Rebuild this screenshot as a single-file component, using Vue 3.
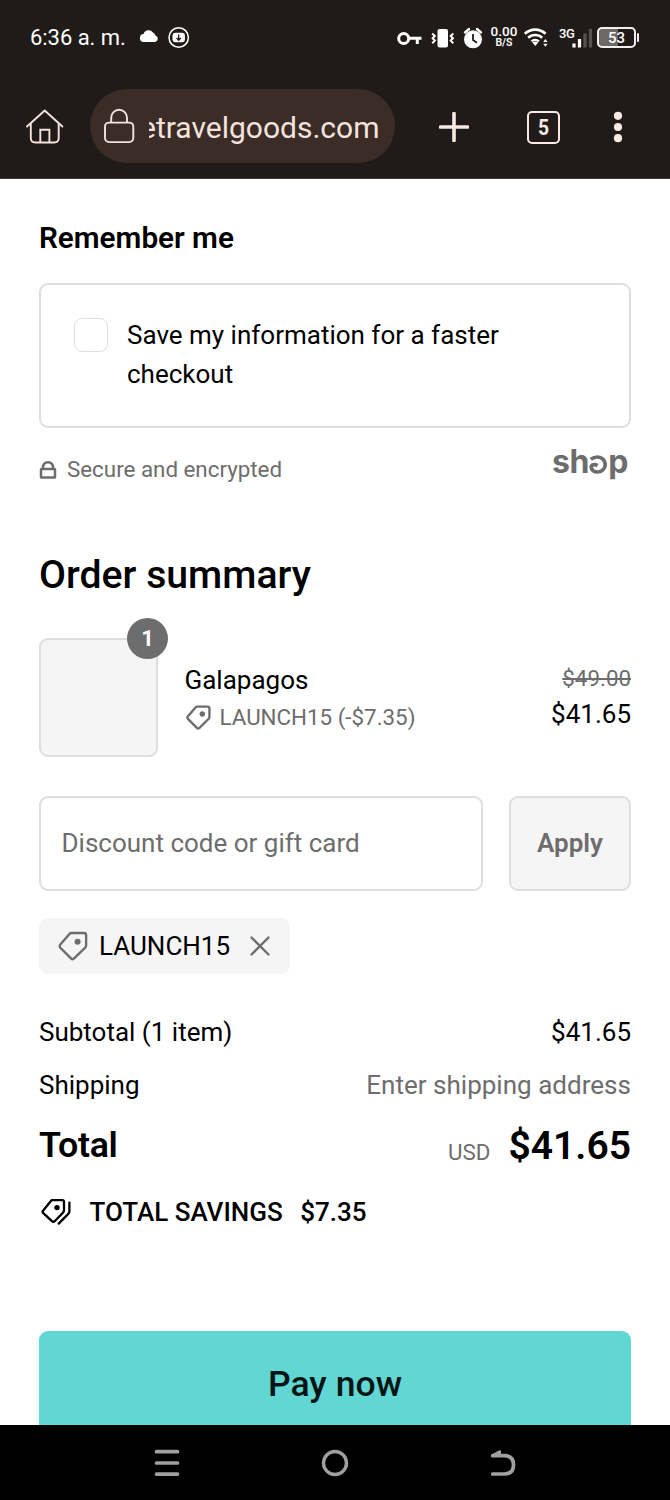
<script setup>
const tagPath = 'M13.6 2H26.4Q28.6 2 28.6 4.2V14.4Q28.6 16 27.4 17.1L16.4 27.9Q14.8 29.4 13.2 27.8L2.4 17Q1 15.4 2.4 13.8L11.6 3Q12.4 2 13.6 2Z'
</script>

<template>
  <div class="screen">
    <header class="chrome">
      <div class="status">
        <span class="time">6:36 a. m.</span>
        <svg class="notif" width="52" height="24" viewBox="138 26 52 24">
          <path d="M143 42a4 4 0 0 1 .6-7.9a5.2 5.2 0 0 1 9.3-1.6a4.4 4.4 0 0 1 2.6 3.1a3.3 3.3 0 0 1-.5 6.4z" fill="#fff" />
          <circle cx="178.700" cy="37.500" r="9.700" fill="none" stroke="#fff" stroke-width="1.500" />
          <rect x="172.500" y="32.800" width="12.400" height="9.400" rx="3" fill="#fff" />
          <path d="M178.700 34.500v5.500M176.600 38l2.100 2.200l2.100-2.200" fill="none" stroke="#201b18" stroke-width="1.300" />
        </svg>
        <svg class="sys" width="96" height="26" viewBox="394 24 96 26">
          <g fill="none" stroke="#fff">
            <circle cx="403.700" cy="37.500" r="5" stroke-width="3" />
            <path d="M409 37.200H421.500M417.300 37.500v5.500" stroke-width="3" />
            <path d="M432.200 32.500l2.600 2.500l-2.200 2.300l2.200 2.300l-2.600 2.700M453.300 32.500l-2.600 2.500l2.200 2.300l-2.200 2.300l2.600 2.700" stroke-width="2" />
            <path d="M465 31.500l4-3.500M481 31.500l-4-3.500" stroke-width="2.400" stroke-linecap="round" />
          </g>
          <rect x="437.500" y="28" width="10.500" height="18.500" rx="2" fill="#fff" />
          <circle cx="473" cy="38.300" r="9" fill="#fff" />
          <path d="M473 33v6l4 2.700" fill="none" stroke="#201b18" stroke-width="1.800" />
        </svg>
        <span class="speed"><b>0.00</b><i>B/S</i></span>
        <svg class="wifi" width="26" height="24" viewBox="523 26 26 24">
          <g fill="none" stroke="#fff" stroke-width="2.600">
            <path d="M524.800 33.800a15 15 0 0 1 20.800 0" />
            <path d="M528.200 37.800a10 10 0 0 1 14 0" />
            <path d="M531.500 41.400a5.500 5.500 0 0 1 7.400 0" />
          </g>
          <path d="M532.400 42.500l2.900 3.600l2.900-3.600q-2.900-2-5.800 0z" fill="#fff" />
          <path d="M543.200 42l2.200-3l2.200 3zM543.200 43.800h4.400l-2.200 3z" fill="#fff" />
        </svg>
        <span class="net">3G</span>
        <svg class="bars" width="22" height="24" viewBox="571 25 22 24">
          <path d="M574 46.500v-4M579.500 46.500v-8.500" stroke="#fff" stroke-width="3.200" />
          <path d="M585 46.500v-14M590.500 46.500v-18.500" stroke="#57524f" stroke-width="3.200" />
        </svg>
        <span class="battery"><span>53</span></span><span class="cap"></span>
      </div>
      <div class="toolbar">
        <svg class="home" width="40" height="38" viewBox="0 0 40 38">
          <g fill="none" stroke="#f3e3dc" stroke-width="1.900" stroke-linecap="round" stroke-linejoin="round">
            <path d="M2 18.500L19.700 2.500L37.400 18.500" />
            <path d="M5.800 16V30Q5.800 34.500 10.300 34.500H29.200Q33.700 34.500 33.700 30V16" />
            <path d="M15.300 34V21.700H24.400V34" stroke-linejoin="miter" />
          </g>
        </svg>
        <div class="url">
          <svg width="32" height="36" viewBox="0 0 32 36">
            <g fill="none" stroke="#f3e3dc" stroke-width="1.900">
              <rect x="2" y="14.600" width="28.300" height="19.500" rx="4" />
              <path d="M8.200 14.500V9.700a7.900 7.900 0 0 1 15.800 0V14.500" />
            </g>
          </svg>
          <div class="domain"><span>etravelgoods.com</span></div>
        </div>
        <svg class="plus" width="30" height="30" viewBox="0 0 30 30">
          <path d="M15 1.500V28.500M1.500 15H28.500" stroke="#f8e9e3" stroke-width="3.600" stroke-linecap="round" />
        </svg>
        <span class="tabs"><span>5</span></span>
        <svg class="dots" width="10" height="32" viewBox="0 0 10 32">
          <g fill="#f8e9e3"><circle cx="5" cy="4.800" r="4.100" /><circle cx="5" cy="16" r="4.100" /><circle cx="5" cy="27.200" r="4.100" /></g>
        </svg>
      </div>
    </header>

    <main>
      <h2 class="remember">Remember me</h2>
      <div class="save">
        <span class="check"></span>
        <p><span>Save my information for a faster</span><br><span>checkout</span></p>
      </div>
      <div class="secure">
        <svg width="18" height="20" viewBox="0 0 18 20">
          <g fill="none" stroke="#6d6d6d" stroke-width="2.500" stroke-linejoin="round">
            <rect x="2" y="9" width="14" height="8.600" rx=".6" />
            <path d="M3.800 9V7.800Q4.300 2.300 9 2.300Q13.700 2.300 14.200 7.800V9" />
          </g>
        </svg>
        <span class="sectext">Secure and encrypted</span>
        <span class="shop" aria-label="shop">
          <span>sh</span>
          <svg width="18" height="20" viewBox="0 0 18 20">
            <path d="M1.800 4.300Q4.500 2 8.600 2A7.400 7.400 0 0 1 8.800 17C5 17 2.300 15 2.300 12.300C2.300 9.600 5.400 8.700 8.600 10.600" fill="none" stroke="#6d6d6d" stroke-width="3.700" />
          </svg>
          <span>p</span>
        </span>
      </div>

      <h1>Order summary</h1>
      <div class="item">
        <div class="thumb"><span class="badge">1</span></div>
        <div class="info">
          <span class="name">Galapagos</span>
          <span class="promo">
            <svg width="25" height="25" viewBox="0 0 30.500 30.500">
              <path :d="tagPath" fill="none" stroke="#6d6d6d" stroke-width="2.900" />
              <circle cx="19.900" cy="10.900" r="3.300" fill="#6d6d6d" />
            </svg>
            <span>LAUNCH15 (-$7.35)</span>
          </span>
        </div>
        <div class="prices"><s>$49.00</s><span>$41.65</span></div>
      </div>

      <div class="discount">
        <div class="field"><span>Discount code or gift card</span></div>
        <div class="apply"><span>Apply</span></div>
      </div>
      <div class="chip">
        <svg width="30" height="30" viewBox="0 0 30.500 30.500">
          <path :d="tagPath" fill="none" stroke="#6d6d6d" stroke-width="2.400" />
          <circle cx="19.900" cy="10.900" r="3.100" fill="#6d6d6d" />
        </svg>
        <span>LAUNCH15</span>
        <svg class="x" width="20" height="20" viewBox="0 0 20 20">
          <path d="M1.500 1.500L18.500 18.500M18.500 1.500L1.500 18.500" stroke="#6d6d6d" stroke-width="2.400" stroke-linecap="round" />
        </svg>
      </div>

      <div class="row"><span>Subtotal (1 item)</span><span>$41.65</span></div>
      <div class="row ship"><span>Shipping</span><span class="muted">Enter shipping address</span></div>
      <div class="row total">
        <span class="tl">Total</span><span class="usd">USD</span><span class="sum">$41.65</span>
      </div>
      <div class="savings">
        <svg width="32" height="28" viewBox="0 0 32 28">
          <g fill="none" stroke="#000" stroke-width="2.300" stroke-linecap="round" stroke-linejoin="round">
            <path d="M12.400 2.200H22.300Q24 2.200 24 3.900V12.200Q24 13.600 23 14.600L14.700 23.200Q13.300 24.500 11.900 23.200L3.300 15.200Q2 13.900 3.200 12.500L10.700 3.200Q11.400 2.200 12.400 2.200Z" />
            <path d="M29.400 4.600V13.300Q29.400 14.800 28.300 15.900L18.700 25.600" />
          </g>
          <circle cx="17" cy="9.600" r="2.700" />
        </svg>
        <span class="savl">TOTAL SAVINGS</span><span class="savv">$7.35</span>
      </div>
      <div class="pay"><span>Pay now</span></div>
    </main>

    <footer>
      <svg width="26" height="28" viewBox="0 0 26 28">
        <path d="M2.500 2.700H23.500M2.500 14H23.500M2.500 25.100H23.500" stroke="#a0a0a0" stroke-width="3.700" stroke-linecap="round" />
      </svg>
      <svg width="28" height="28" viewBox="0 0 28 28">
        <circle cx="14" cy="14" r="11.500" fill="none" stroke="#a0a0a0" stroke-width="3.400" />
      </svg>
      <svg width="26" height="28" viewBox="0 0 26 28">
        <path d="M2.700 6.700H14.500Q23.500 7 23.500 15.900Q23.500 24.800 14.500 25H2.700" fill="none" stroke="#a0a0a0" stroke-width="3.700" stroke-linecap="round" />
        <path d="M2.500 6.500L9.800 2.400V6.500Z" fill="#a0a0a0" stroke="#a0a0a0" stroke-width="2.400" stroke-linejoin="round" />
      </svg>
    </footer>
  </div>
</template>

<style>
body { margin: 0; background: #fff; }
</style>

<style scoped>
.screen { width: 670px; height: 1500px; overflow: hidden; display: flex; flex-direction: column; font-family: Roboto, "Liberation Sans", sans-serif; color: #000; background: #fff; }
svg { display: block; flex: none; }
span { white-space: nowrap; }
.chrome { height: 179px; flex: none; background: #201b18; box-sizing: border-box; border-bottom: 1px solid #3a3633; }
.status { height: 75px; display: flex; align-items: center; color: #fff; padding-left: 30px; }
.time { font-size: 22px; width: 108px; line-height: 75px; letter-spacing: -.05px; }
.sys { margin-left: 204px; }
.speed { width: 30px; display: flex; flex-direction: column; align-items: center; margin: -3px 1px 0 -1px; }
.speed b { font-size: 13.500px; line-height: 12px; font-weight: 500; }
.speed i { font-size: 10.500px; line-height: 11px; font-style: normal; font-weight: 600; }
.wifi { margin-left: 3px; }
.net { font-size: 13px; width: 16px; margin-left: 10px; margin-top: -9px; font-weight: 500; letter-spacing: -.5px; }
.bars { margin-left: -4px; }
.battery { width: 35px; height: 17px; border: 2px solid #f2eeec; border-radius: 5px; margin-left: 4px; background: linear-gradient(90deg, #6d6866 54%, transparent 54%); display: flex; align-items: center; justify-content: center; font-size: 15px; font-weight: 500; }
.cap { width: 2px; height: 9px; background: #f2eeec; margin-left: 1px; border-radius: 1px; }
.toolbar { height: 104px; display: flex; align-items: center; }
.home { margin-left: 25px; }
.url { width: 305px; height: 74px; border-radius: 37px; background: #3b2c27; margin-left: 24.500px; margin-top: -2px; display: flex; align-items: center; }
.url svg { margin-left: 13px; }
.domain { width: 236px; margin-left: 14px; overflow: hidden; display: flex; justify-content: flex-end; color: #f3e3dc; font-size: 30px; line-height: 40px; padding-top: 4px; }
.domain span { margin-right: 5px; }
.plus { margin-left: 44.500px; }
.tabs { width: 29px; height: 29px; border: 2px solid #f8e9e3; border-radius: 5px; margin-left: 58px; color: #f8e9e3; font-size: 22px; line-height: 29px; font-weight: 700; text-align: center; }
.tabs span { display: block; transform: scaleX(.88); }
.dots { margin-left: 52.500px; }

main { height: 1246px; flex: none; overflow: hidden; padding: 0 39px; box-sizing: border-box; display: flex; flex-direction: column; }
.remember { margin: 39px 0 0; font-size: 29.700px; line-height: 40px; font-weight: 600; flex: none; }
.save { margin-top: 25px; height: 145px; flex: none; box-sizing: border-box; border: 2px solid #dedede; border-radius: 9px; padding: 33px 0 0 33px; display: flex; }
.check { width: 32px; height: 32px; border: 1.500px solid #dedede; border-radius: 8px; flex: none; }
.save p { margin: -2px 0 0 19px; font-size: 26px; line-height: 39px; }
.secure { height: 84px; flex: none; display: flex; color: #6d6d6d; }
.secure > svg { margin-top: 32px; }
.sectext { font-size: 22.350px; line-height: 82px; margin-left: 10px; }
.shop { margin: 14px 3px 0 auto; display: flex; font-family: Inter, sans-serif; font-weight: 700; font-size: 32px; line-height: 40px; letter-spacing: -.3px; }
.shop svg { margin: 13px 1px 0 0; }
h1 { margin: 40px 0 0; font-size: 39.200px; line-height: 46px; font-weight: 500; flex: none; }
.item { margin-top: 40px; height: 119px; flex: none; display: flex; }
.thumb { width: 119px; height: 119px; box-sizing: border-box; border: 2px solid #dedede; border-radius: 9px; background: #f5f5f5; position: relative; }
.badge { position: absolute; left: 86px; top: -22px; width: 41px; height: 41px; border-radius: 50%; background: #6d6d6d; color: #fff; font-size: 22px; line-height: 41px; font-weight: 700; text-align: center; }
.info { margin-left: 26.500px; display: flex; flex-direction: column; padding-top: 23px; }
.name { font-size: 26px; line-height: 38px; }
.promo { display: flex; align-items: center; font-size: 22.350px; line-height: 36px; color: #6d6d6d; gap: 9px; margin-left: 1px; }
.prices { margin-left: auto; display: flex; flex-direction: column; align-items: flex-end; padding-top: 24px; }
.prices s { font-size: 22.350px; line-height: 33px; color: #6d6d6d; }
.prices span { font-size: 26px; line-height: 39px; }
.discount { margin-top: 39px; height: 95px; flex: none; display: flex; gap: 26px; }
.field, .apply { box-sizing: border-box; border: 2px solid #dedede; border-radius: 9px; display: flex; font-size: 26px; line-height: 91px; color: #6d6d6d; }
.field { width: 444px; padding-left: 20.500px; }
.apply { width: 122px; background: #f5f5f5; justify-content: center; font-weight: 600; }
.chip { margin-top: 27px; width: 251px; height: 56px; flex: none; box-sizing: border-box; border-radius: 9px; background: #f5f5f5; display: flex; align-items: center; padding-left: 19px; font-size: 26px; }
.chip span { margin-left: 11px; width: 131px; }
.chip .x { margin-left: 19.500px; }
.row { display: flex; justify-content: space-between; font-size: 26px; line-height: 39px; margin-top: 39px; flex: none; }
.ship { margin-top: 14px; }
.muted { color: #6d6d6d; letter-spacing: .02px; }
.total { margin-top: 11px; line-height: 60px; }
.tl { font-size: 35.800px; font-weight: 600; letter-spacing: -.3px; line-height: 59px; }
.usd { font-size: 22.350px; color: #6d6d6d; margin-left: auto; line-height: 72px; height: 60px; }
.sum { font-size: 39px; font-weight: 600; margin-left: 18px; }
.savings { display: flex; align-items: center; margin-top: 16px; height: 40px; flex: none; font-size: 26px; font-weight: 500; }
.savings svg { margin-left: 1px; }
.savl { margin-left: 17.500px; }
.savv { margin-left: 17.500px; }
.pay { margin-top: 99px; height: 106px; flex: none; border-radius: 9px; background: #60d7d3; display: flex; justify-content: center; font-size: 35.600px; line-height: 106px; font-weight: 500; color: #061414; }
footer { height: 75px; flex: none; background: #000; display: flex; align-items: center; padding-left: 154px; gap: 141px; }
</style>
